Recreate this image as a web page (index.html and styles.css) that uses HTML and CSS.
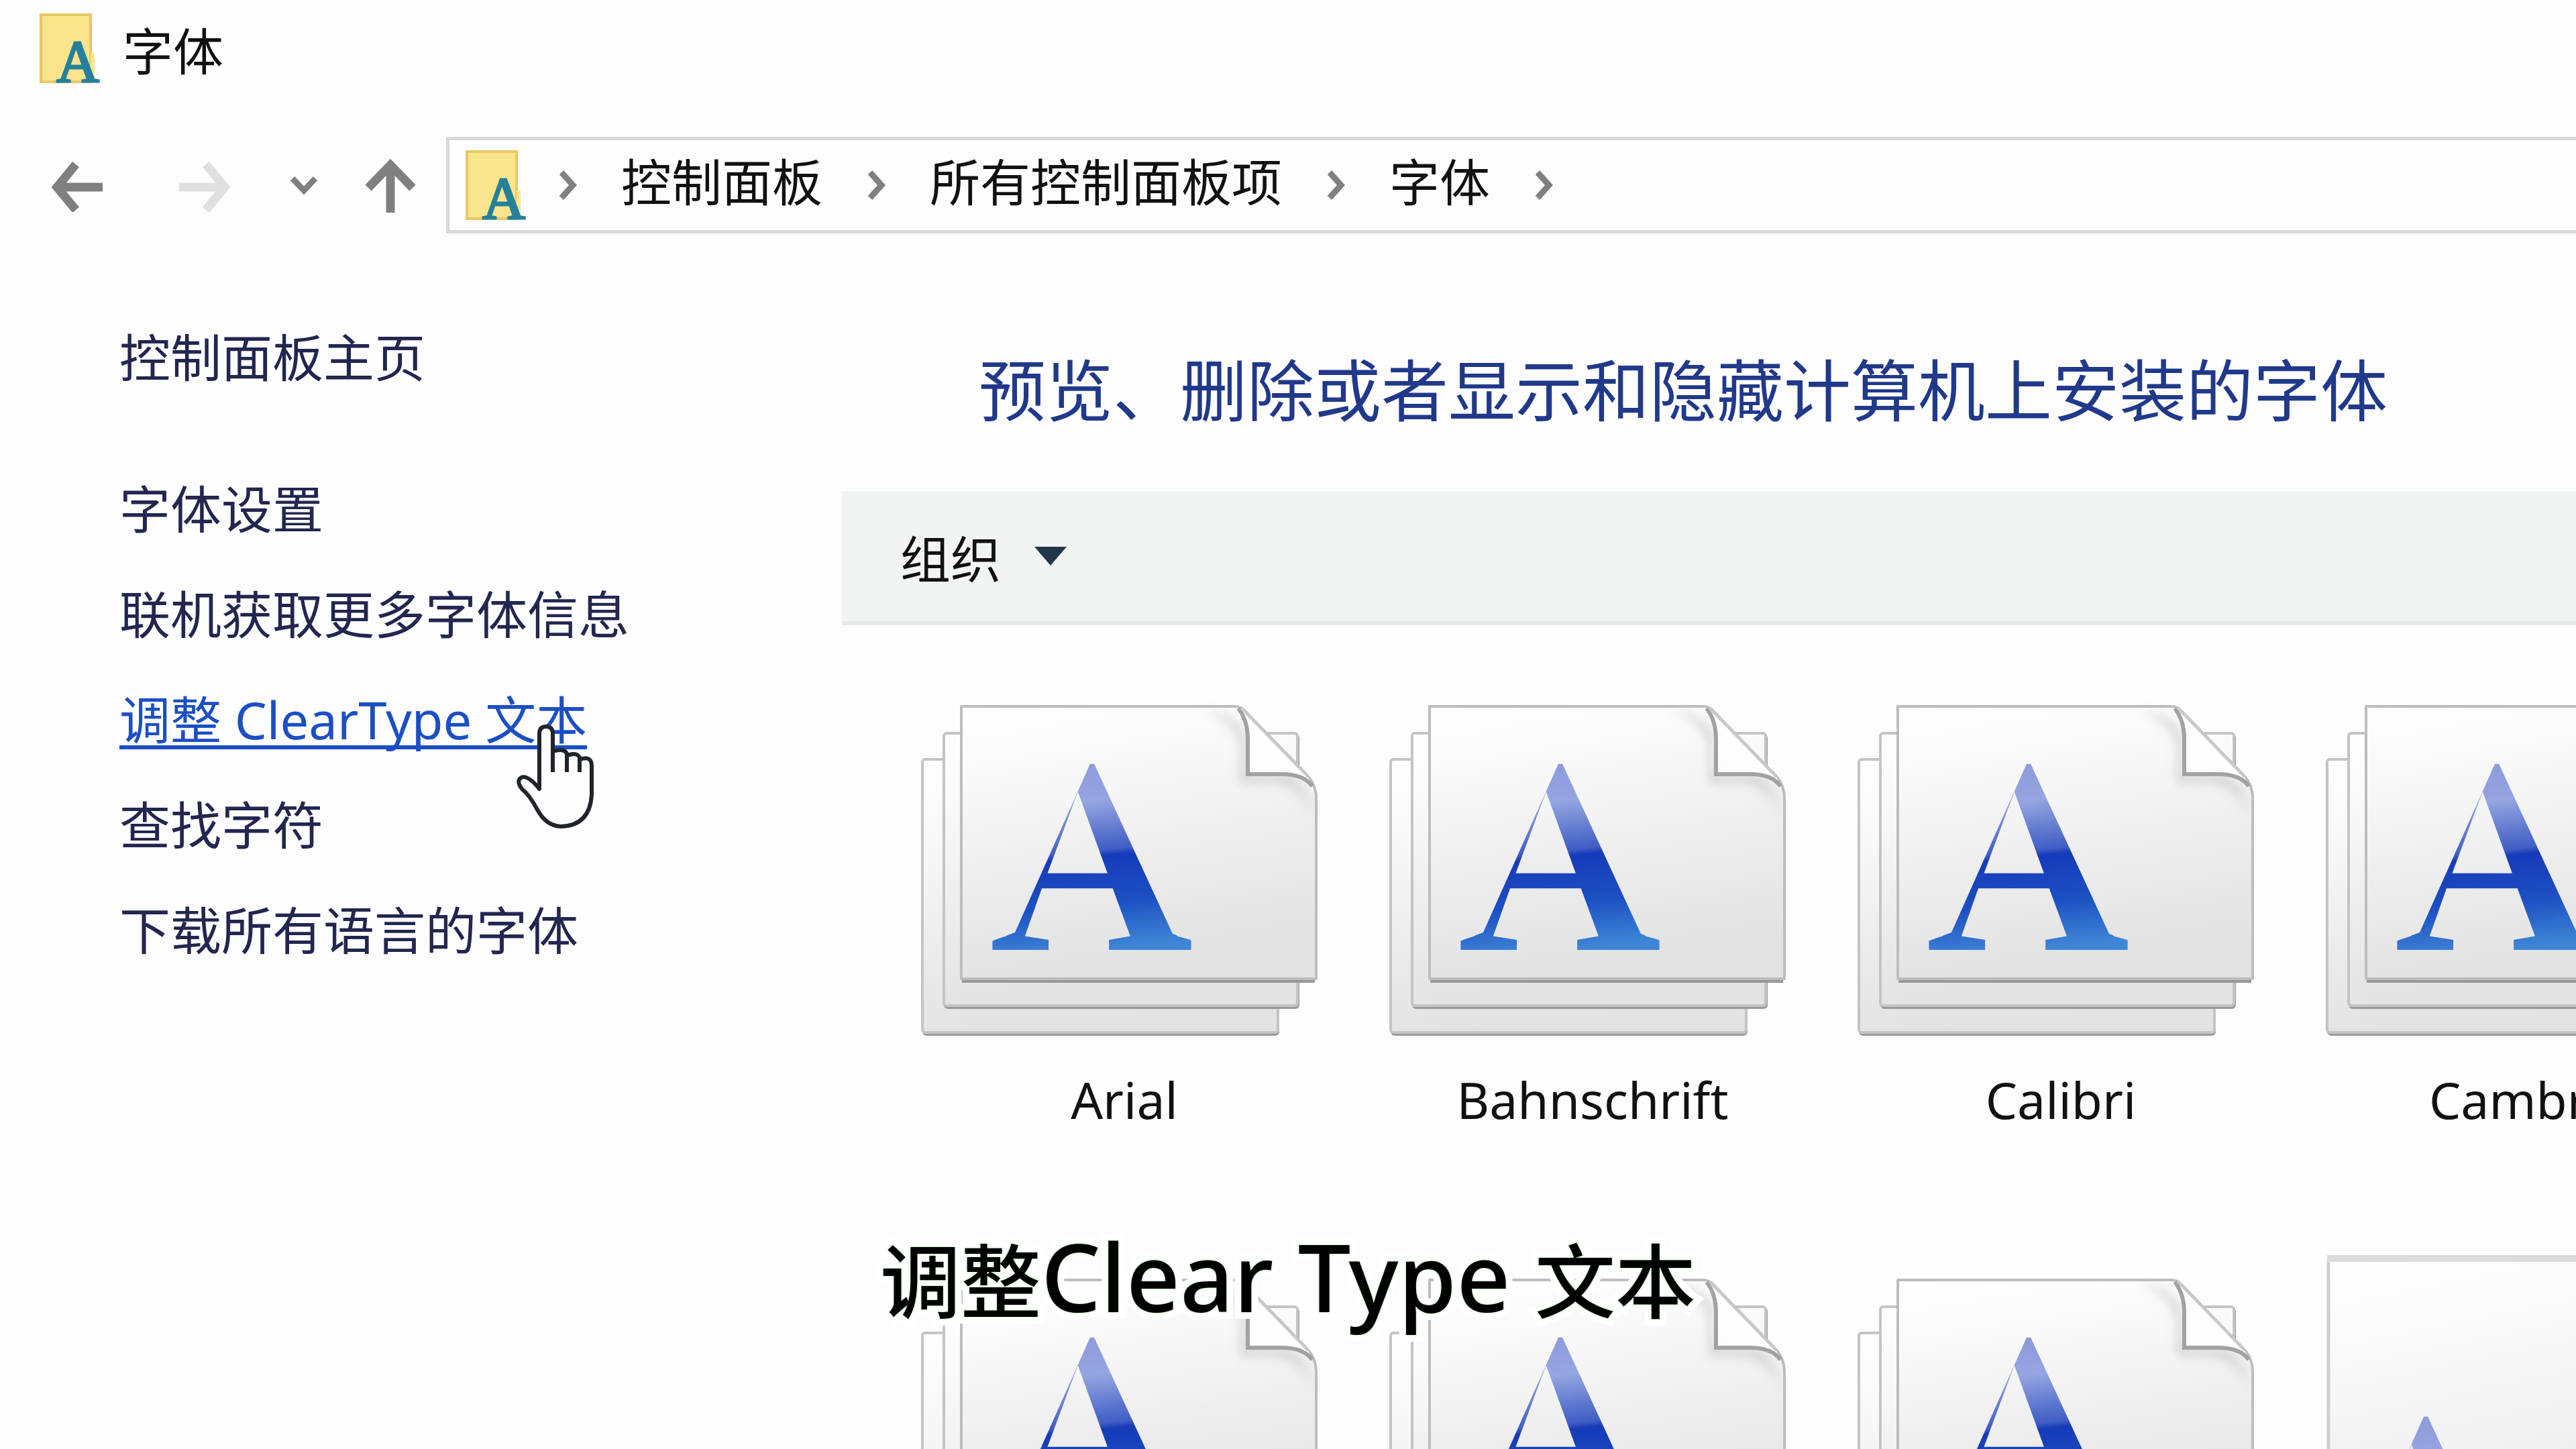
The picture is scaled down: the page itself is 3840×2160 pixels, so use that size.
FILE: index.html
```html
<!DOCTYPE html>
<html lang="zh-CN">
<head>
    <meta charset="UTF-8">
    <meta name="viewport" content="width=device-width, initial-scale=1.0">
    <title>字体</title>
    <link rel="stylesheet" href="styles.css">
</head>
<body>
    <!-- shared icons -->
    <svg class="sprite" aria-hidden="true">
        <defs>
            <linearGradient id="paper" x1="0" y1="0" x2="0.2" y2="1">
                <stop offset="0" stop-color="#ffffff"/>
                <stop offset="0.3" stop-color="#f8f8f8"/>
                <stop offset="0.7" stop-color="#ebebeb"/>
                <stop offset="1" stop-color="#e3e3e3"/>
            </linearGradient>
            <linearGradient id="curl" x1="1" y1="0" x2="0" y2="1">
                <stop offset="0" stop-color="#c9c9c9"/>
                <stop offset="0.3" stop-color="#e4e4e4"/>
                <stop offset="0.45" stop-color="#ffffff"/>
                <stop offset="1" stop-color="#fafafa"/>
            </linearGradient>
            <linearGradient id="blue" gradientUnits="userSpaceOnUse" x1="235" y1="124" x2="265" y2="406">
                <stop offset="0" stop-color="#8c9bda"/>
                <stop offset="0.22" stop-color="#94a5e0"/>
                <stop offset="0.48" stop-color="#3f5dc4"/>
                <stop offset="0.51" stop-color="#163bb8"/>
                <stop offset="0.75" stop-color="#1c4fc2"/>
                <stop offset="1" stop-color="#3f86d6"/>
            </linearGradient>
            <!-- sharpens the top of the letter on the pages -->
            <clipPath id="peak">
                <path d="M258 122L143 380L100 396L95 412H425L420 396L378 382Z"/>
            </clipPath>
            <filter id="soft" x="-20%" y="-20%" width="140%" height="140%">
                <feGaussianBlur stdDeviation="8"/>
            </filter>
        </defs>

        <symbol id="icon-folder" viewBox="0 0 90 104">
            <rect x="2" y="2" width="74" height="100" fill="#fae58c" stroke="#e8c866" stroke-width="4"/>
            <path d="M76 60h6v42h-6z" fill="#fae58c"/>
        </symbol>

        <symbol id="icon-crumb" viewBox="0 0 30 46">
            <path d="M6 4L23 23L6 42" fill="none" stroke="#808080" stroke-width="9"/>
        </symbol>

        <symbol id="icon-stack" viewBox="0 0 612 540">
            <rect x="7" y="125" width="528" height="407" rx="4" fill="none" stroke="#9a9a9a" stroke-width="4"/>
            <rect x="5" y="122" width="530" height="407" rx="4" fill="url(#paper)" stroke="#c4c4c4" stroke-width="4"/>
            <rect x="39" y="86" width="526" height="406" rx="4" fill="none" stroke="#9a9a9a" stroke-width="4"/>
            <rect x="37" y="83" width="527" height="406" rx="4" fill="url(#paper)" stroke="#c4c4c4" stroke-width="4"/>
            <path d="M64 452H590" stroke="#989898" stroke-width="6" fill="none"/>
            <path d="M63 43H470Q480 43 486 50L578 145Q592 160 592 180V449H63Z" fill="url(#paper)" stroke="#bdbdbd" stroke-width="4" stroke-linejoin="round"/>
            <path d="M425 48Q475 55 488 92V146H540Q580 150 588 215Q578 165 535 156H480V100Q472 66 425 48Z" fill="#bbbbbb" opacity="0.7" filter="url(#soft)"/>
            <path d="M476 44Q492 62 491 90V143H550Q575 143 586 160L578 145L486 50Z" fill="url(#curl)"/>
            <path d="M476 46Q490 64 490 92V144H540Q574 144 586 162" fill="none" stroke="#a2a2a2" stroke-width="6"/>
            <path d="M480 45L580 148" fill="none" stroke="#c9c9c9" stroke-width="4"/>
        </symbol>

        <symbol id="icon-page" viewBox="0 0 612 540">
            <rect x="7" y="10" width="590" height="620" rx="4" fill="url(#paper)" stroke="#cfcfcf" stroke-width="5"/>
            <path d="M5 11H600" stroke="#dcdcdc" stroke-width="10"/>
        </symbol>
    </svg>

    <header>
        <div class="titlebar">
            <svg class="folder" viewBox="0 0 90 104"><use href="#icon-folder"/><text x="57" y="101">A</text></svg>
            <h1>字体</h1>
        </div>
        <nav class="navbar">
            <button class="nav-btn" type="button" aria-label="后退">
                <svg width="80" height="80" viewBox="0 0 80 80"><path d="M76 43H8M36 9L8 43L36 77" fill="none" stroke="#808080" stroke-width="13"/></svg>
            </button>
            <button class="nav-btn" type="button" aria-label="前进" disabled>
                <svg width="80" height="80" viewBox="0 0 80 80"><path d="M2 43H70M42 9L70 43L42 77" fill="none" stroke="#e0e0e0" stroke-width="13"/></svg>
            </button>
            <button class="nav-btn recent" type="button" aria-label="最近浏览的位置">
                <svg width="44" height="36" viewBox="0 0 44 36"><path d="M5 8L22 26L39 8" fill="none" stroke="#808080" stroke-width="9"/></svg>
            </button>
            <button class="nav-btn up" type="button" aria-label="向上">
                <svg width="80" height="84" viewBox="0 0 80 84"><path d="M40 83V12M7 46L40 12L73 46" fill="none" stroke="#808080" stroke-width="13"/></svg>
            </button>
            <div class="address">
                <svg class="folder" viewBox="0 0 90 104"><use href="#icon-folder"/><text x="57" y="101">A</text></svg>
                <svg class="crumb"><use href="#icon-crumb"/></svg>
                <a href="#">控制面板</a>
                <svg class="crumb"><use href="#icon-crumb"/></svg>
                <a href="#">所有控制面板项</a>
                <svg class="crumb"><use href="#icon-crumb"/></svg>
                <a href="#">字体</a>
                <svg class="crumb"><use href="#icon-crumb"/></svg>
            </div>
        </nav>
    </header>

    <main>
        <aside>
            <a class="home" href="#">控制面板主页</a>
            <ul>
                <li><a href="#">字体设置</a></li>
                <li><a href="#">联机获取更多字体信息</a></li>
                <li class="hovered">
                    <a href="#">调整 ClearType 文本</a>
                    <svg class="cursor" width="116" height="156" viewBox="0 0 116 156">
                        <path d="M34 96V14Q34 3 44 3Q54 3 54 14V40Q73 34 76 46Q92 40 95 52Q112 46 112 62V105Q109 151 66 152Q44 151 31 127Q20 106 8 96Q-1 84 7 79Q17 75 34 96Z" fill="#fdfdfd" stroke="#22242c" stroke-width="6" stroke-linejoin="round"/>
                        <path d="M54 38V71M75 44V71M94 50V71" fill="none" stroke="#22242c" stroke-width="6"/>
                    </svg>
                </li>
                <li><a href="#">查找字符</a></li>
                <li><a href="#">下载所有语言的字体</a></li>
            </ul>
        </aside>

        <section class="content">
            <h2>预览、删除或者显示和隐藏计算机上安装的字体</h2>
            <div class="toolbar">
                <button class="organize" type="button">组织
                    <svg width="48" height="28" viewBox="0 0 48 28"><path d="M0 0H48L24 28Z" fill="#22374c"/></svg>
                </button>
            </div>
            <div class="fonts">
                <a class="font" href="#">
                    <svg viewBox="0 0 612 540"><use href="#icon-stack"/><text x="257" y="406">A</text></svg>
                    <span>Arial</span>
                </a>
                <a class="font" href="#">
                    <svg viewBox="0 0 612 540"><use href="#icon-stack"/><text x="257" y="406">A</text></svg>
                    <span>Bahnschrift</span>
                </a>
                <a class="font" href="#">
                    <svg viewBox="0 0 612 540"><use href="#icon-stack"/><text x="257" y="406">A</text></svg>
                    <span>Calibri</span>
                </a>
                <a class="font" href="#">
                    <svg viewBox="0 0 612 540"><use href="#icon-stack"/><text x="257" y="406">A</text></svg>
                    <span>Cambria</span>
                </a>
                <div class="font">
                    <svg viewBox="0 0 612 540"><use href="#icon-stack"/><text x="257" y="406">A</text></svg>
                </div>
                <div class="font">
                    <svg viewBox="0 0 612 540"><use href="#icon-stack"/><text x="257" y="406">A</text></svg>
                </div>
                <div class="font">
                    <svg viewBox="0 0 612 540"><use href="#icon-stack"/><text x="257" y="406">A</text></svg>
                </div>
                <div class="font">
                    <svg viewBox="0 0 612 540"><use href="#icon-page"/><g transform="translate(-106 118)"><text x="257" y="406">A</text></g></svg>
                </div>
            </div>
        </section>
    </main>

    <p class="caption">调整<span>Clear Type </span>文本</p>
</body>
</html>
```

FILE: styles.css
```css
* {
    box-sizing: border-box;
}

body {
    font-family: 'Noto Sans', 'Noto Sans CJK SC', sans-serif;
    font-size: 75px;
    margin: 0;
    height: 100vh;
    display: flex;
    flex-direction: column;
    overflow: hidden;
    background-color: #fdfdfd;
    color: #111;
}

a {
    color: inherit;
    text-decoration: none;
}

button {
    font: inherit;
    color: inherit;
    background: none;
    border: none;
    padding: 0;
}

svg {
    display: block;
    flex: none;
}

svg text {
    font-family: 'Liberation Serif', serif;
    text-anchor: middle;
}

.sprite {
    position: absolute;
    width: 0;
    height: 0;
}

.folder {
    width: 90px;
    height: 104px;
    overflow: visible;
}

.folder text {
    font-size: 88px;
    fill: #26809c;
    stroke: #26809c;
    stroke-width: 3px;
}

/* title and address bar */
.titlebar {
    display: flex;
    align-items: center;
    gap: 34px;
    height: 144px;
    padding-left: 59px;
}

h1 {
    margin: 0;
    font-size: 75px;
    font-weight: normal;
}

.navbar {
    display: flex;
    height: 144px;
    margin-top: 60px;
    padding-left: 23px;
}

.nav-btn {
    width: 188px;
    display: flex;
    align-items: center;
    justify-content: center;
}

.nav-btn.recent {
    width: 108px;
}

.nav-btn.up {
    width: 150px;
}

.address {
    flex: 1;
    display: flex;
    align-items: center;
    gap: 65px;
    margin-left: 8px;
    padding-left: 24px;
    border: 5px solid #d9d9dc;
    border-right: none;
    white-space: nowrap;
}

.address a {
    padding-bottom: 18px;
}

.address .folder {
    margin-right: -18px;
}

.crumb {
    width: 30px;
    height: 46px;
}

/* page body */
main {
    flex: 1;
    min-height: 0;
    display: flex;
}

aside {
    flex: none;
    width: 1255px;
    padding: 106px 0 0 178px;
    font-size: 76px;
    line-height: 157px;
    color: #23264f;
}

.home {
    display: block;
    margin-bottom: 69px;
}

aside ul {
    list-style: none;
    margin: 0;
    padding: 0;
}

.hovered {
    position: relative;
    color: #1c4fc4;
}

.hovered a {
    text-decoration: underline;
    text-decoration-thickness: 6px;
    text-underline-offset: 9px;
    text-decoration-skip-ink: none;
}

.cursor {
    position: absolute;
    left: 592px;
    top: 86px;
}

.content {
    flex: 1;
    min-width: 0;
    padding-top: 86px;
    overflow: hidden;
}

h2 {
    margin: 0 0 4px;
    padding-left: 204px;
    font-size: 100px;
    font-weight: normal;
    line-height: 294px;
    color: #21398a;
    white-space: nowrap;
}

.toolbar {
    height: 200px;
    padding-left: 87px;
    display: flex;
    background-color: #f2f4f4;
    border-bottom: 6px solid #e7e8e8;
}

.organize {
    display: flex;
    align-items: center;
    gap: 50px;
}

.fonts {
    display: grid;
    grid-template-columns: repeat(4, 698px);
    row-gap: 181px;
    padding: 78px 0 0 72px;
}

.font {
    display: flex;
    flex-direction: column;
    align-items: center;
    gap: 44px;
    line-height: 90px;
}

.font svg {
    width: 612px;
    height: 540px;
    overflow: visible;
}

.font text {
    font-size: 420px;
    font-weight: bold;
    fill: url(#blue);
    clip-path: url(#peak);
}

/* subtitle over the window */
.caption {
    position: absolute;
    left: 0;
    right: 0;
    bottom: 150px;
    margin: 0;
    text-align: center;
    font-size: 120px;
    font-weight: 500;
    line-height: 200px;
    color: #000;
    white-space: pre;
    -webkit-text-stroke: 20px #fff;
    paint-order: stroke fill;
    text-shadow: 0 0 3px #9fe89f;
}

.caption span {
    font-size: 140px;
}
```
